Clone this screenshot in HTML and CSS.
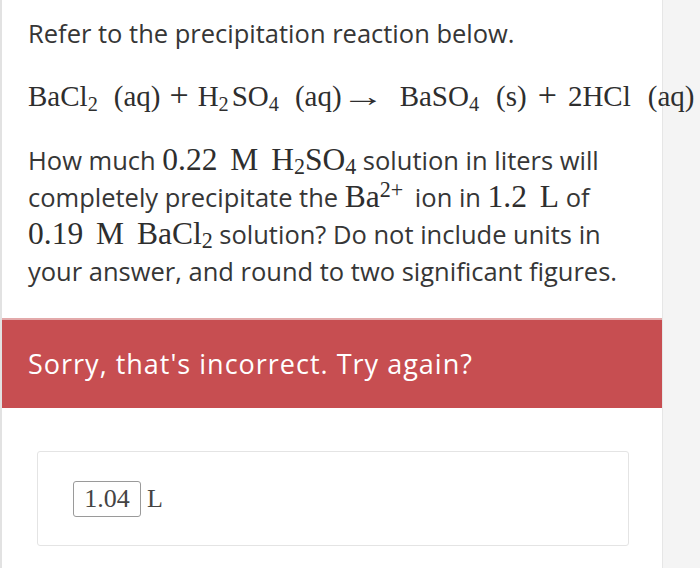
FILE: index.html
```html
<!DOCTYPE html>
<html>
<head>
<meta charset="utf-8">
<link rel="stylesheet" href="styles.css">
</head>
<body>
<div class="panel">
  <div class="prompt">
    <p class="title">Refer to the precipitation reaction below.</p>
    <p class="equation">BaCl<sub>2</sub><span class="sp"></span>(aq)<span class="op">+</span>H<sub>2</sub>SO<sub>4</sub><span class="sp"></span>(aq)<span class="arrow">→</span>BaSO<sub>4</sub><span class="sp sp-wide"></span>(s)<span class="op op-wide">+</span>2HCl<span class="sp sp-last"></span>(aq)</p>
    <p class="question">How much <span class="math">0.22 M H<sub>2</sub>SO<sub>4</sub></span> solution in liters will<br>completely precipitate the <span class="math">Ba<sup>2+</sup></span> ion in <span class="math">1.2 L</span> of<br><span class="math">0.19 M BaCl<sub>2</sub></span> solution? Do not include units in<br>your answer, and round to two significant figures.</p>
  </div>
  <div class="feedback">Sorry, that's incorrect. Try again?</div>
  <div class="answer-area">
    <div class="answer-box">
      <span class="input">1.04</span><span class="unit">L</span>
    </div>
  </div>
</div>
</body>
</html>
```

FILE: styles.css
```css
html, body {
  margin: 0;
  padding: 0;
}
body {
  background: #f4f4f4;
  width: 700px;
  height: 568px;
  overflow: hidden;
}
.panel {
  width: 663px;
  height: 568px;
  background: #ffffff;
  border-left: 2px solid #e2e2e2;
  border-right: 1px solid #e6e6e6;
  padding-top: 15px;
  box-sizing: border-box;
}
.prompt {
  padding: 0 10px 0 26px;
  color: #363636;
  font-family: "Open Sans", "Noto Sans", sans-serif;
  font-size: 25.5px;
  white-space: nowrap;
}
.prompt p {
  margin: 0;
}
.title {
  line-height: 36px;
}
.equation {
  margin-top: 27px !important;
  font-family: "Liberation Serif", serif;
  font-size: 29px;
  line-height: 36px;
  color: #2e2e2e;
}
.sp {
  display: inline-block;
  width: 13px;
}
.sp-wide {
  width: 14px;
}
.sp-last {
  width: 17px;
}
.op {
  display: inline-block;
  margin: 0 9px;
  font-size: 34px;
  line-height: 0;
}
.op-wide {
  margin: 0 11px;
}
.arrow {
  display: inline-block;
  width: 30px;
  text-align: center;
  margin: 0 22px 0 6px;
  transform: scaleX(1.5);
}
.equation sub {
  margin-right: 3px;
}
.equation sub {
  font-size: 70%;
  vertical-align: -0.25em;
  line-height: 0;
}
.math sub {
  font-size: 70%;
  vertical-align: -0.2em;
  line-height: 0;
}
.math sup {
  font-size: 70%;
  vertical-align: 0.45em;
  line-height: 0;
  margin-right: 5px;
}
.question {
  margin-top: 28px !important;
  line-height: 37px;
}
.math {
  font-family: "Liberation Serif", serif;
  font-size: 31.5px;
  line-height: 1;
  word-spacing: 5px;
  color: #2e2e2e;
}
.feedback {
  margin-top: 28px;
  height: 90px;
  box-sizing: border-box;
  background: #c74e51;
  border-top: 2px solid #e3a9aa;
  color: #ffffff;
  font-family: "Open Sans", "Noto Sans", sans-serif;
  font-size: 27px;
  letter-spacing: 1px;
  display: flex;
  align-items: center;
  padding: 0 0 2px 26px;
}
.answer-area {
  padding: 43px 33px 0 35px;
}
.answer-box {
  height: 95px;
  box-sizing: border-box;
  border: 1px solid #e4e4e4;
  border-radius: 3px;
  display: flex;
  align-items: center;
  padding-left: 35px;
  font-family: "Liberation Serif", serif;
  color: #444;
}
.input {
  width: 68px;
  height: 36px;
  box-sizing: border-box;
  border: 1px solid #9a9a9a;
  border-radius: 3px;
  font-size: 26px;
  display: flex;
  align-items: center;
  justify-content: center;
}
.unit {
  font-size: 26px;
  margin-left: 6px;
}
```
